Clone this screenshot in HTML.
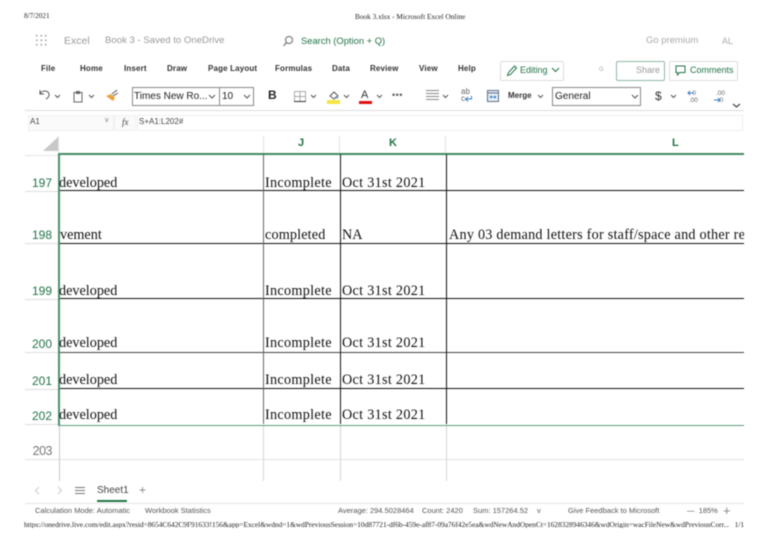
<!DOCTYPE html>
<html><head><meta charset="utf-8"><style>
html,body{margin:0;padding:0;background:#fff}
#p{position:relative;width:768px;height:543px;overflow:hidden;background:#fff;font-family:"Liberation Sans",sans-serif;filter:blur(.45px)}
#p div,#p svg{position:absolute}
.t{white-space:nowrap;line-height:1}
.s{font-family:"Liberation Serif",serif;color:#222}
.c{font-family:"Liberation Serif",serif;font-size:14.2px;color:#111;white-space:nowrap;line-height:1}
.w{letter-spacing:.3px}
.r{font-size:12px;color:#217346;left:25px;width:27px;text-align:right;line-height:1}
.m{font-size:8px;font-weight:bold;color:#333;white-space:nowrap;line-height:1;letter-spacing:.15px}
.h{font-size:11px;font-weight:bold;color:#217346;line-height:1}
.b{background:#111}
.v{background:#666;width:1px}
.st{font-size:7.5px;color:#555;white-space:nowrap;line-height:1}
</style></head><body><div id="p">
<div class="t s" style="left:24px;top:13px;font-size:7.2px">8/7/2021</div>
<div class="t s" style="left:355px;top:13px;font-size:7.3px">Book 3.xlsx - Microsoft Excel Online</div>

<svg style="left:35px;top:34px" width="13" height="13" fill="#999"><rect x="1" y="1" width="1.5" height="1.5"/><rect x="5.5" y="1" width="1.5" height="1.5"/><rect x="10" y="1" width="1.5" height="1.5"/><rect x="1" y="5.5" width="1.5" height="1.5"/><rect x="5.5" y="5.5" width="1.5" height="1.5"/><rect x="10" y="5.5" width="1.5" height="1.5"/><rect x="1" y="10" width="1.5" height="1.5"/><rect x="5.5" y="10" width="1.5" height="1.5"/><rect x="10" y="10" width="1.5" height="1.5"/></svg>
<div class="t" style="left:64px;top:36px;font-size:10.5px;color:#999">Excel</div>
<div class="t" style="left:105px;top:36px;font-size:9.6px;color:#999">Book 3 - Saved to OneDrive</div>
<svg style="left:282px;top:35px" width="12" height="12" fill="none" stroke="#666"><circle cx="7" cy="5" r="3.5"/><path d="M4.500 7.500L1.500 11"/></svg>
<div class="t" style="left:301px;top:36px;font-size:9.4px;color:#217346">Search (Option + Q)</div>
<div class="t" style="left:646px;top:36px;font-size:9.5px;color:#aaa">Go premium</div>
<div class="t" style="left:722px;top:37px;font-size:9px;color:#aaa">AL</div>

<div class="m" style="left:41px;top:65px">File</div>
<div class="m" style="left:80px;top:65px">Home</div>
<div class="m" style="left:124px;top:65px">Insert</div>
<div class="m" style="left:167px;top:65px">Draw</div>
<div class="m" style="left:208px;top:65px">Page Layout</div>
<div class="m" style="left:275px;top:65px">Formulas</div>
<div class="m" style="left:332px;top:65px">Data</div>
<div class="m" style="left:370px;top:65px">Review</div>
<div class="m" style="left:419px;top:65px">View</div>
<div class="m" style="left:458px;top:65px">Help</div>

<div style="left:500px;top:61px;width:62px;height:18px;border:1px solid #ddd;border-radius:2px"></div>
<svg style="left:506px;top:64px" width="12" height="13" fill="none" stroke="#217346"><path d="M1.500 11.500l1-3 6-6.500 2 2-6 6.500z"/></svg>
<div class="t" style="left:520px;top:66px;font-size:9px;color:#217346">Editing</div>
<svg style="left:551px;top:67px" width="9" height="6" fill="none" stroke="#217346"><path d="M1 1l3.500 3.500L8 1"/></svg>
<div class="t" style="left:599px;top:67px;font-size:6px;color:#aaa">G</div>
<div style="left:616px;top:61px;width:47px;height:18px;border:1px solid #8fb8a2;border-radius:2px"></div>
<div class="t" style="left:636px;top:66px;font-size:9px;color:#999">Share</div>
<div style="left:669px;top:61px;width:67px;height:18px;border:1px solid #ddd;border-radius:2px"></div>
<svg style="left:675px;top:65px" width="12" height="11" fill="none" stroke="#217346"><path d="M1 1h9v6.500H4.500L2.500 10V7.500H1z"/></svg>
<div class="t" style="left:690px;top:66px;font-size:9px;color:#217346">Comments</div>

<svg style="left:38px;top:88px" width="15" height="13" fill="none" stroke="#555"><path d="M2 2v4h4M2 6c2-4 8-4 9 0 .5 2-1 4-3 5"/></svg>
<svg style="left:54px;top:94px" width="7" height="5" fill="none" stroke="#555"><path d="M1 1l2.500 2.500L6 1"/></svg>
<svg style="left:72px;top:90px" width="12" height="13" fill="none" stroke="#666"><path d="M2 2.500h8v9.500H2zM4.500 1.500h3v2h-3z"/></svg>
<svg style="left:88px;top:94px" width="7" height="5" fill="none" stroke="#555"><path d="M1 1l2.500 2.500L6 1"/></svg>
<svg style="left:105px;top:89px" width="14" height="14"><path d="M1 7l5-2 4 4-2 3z" fill="#e8a33d"/><path d="M7 5l5-4M8 7l5-3" stroke="#555" fill="none"/></svg>
<div style="left:132px;top:87px;width:86px;height:17px;border:1px solid #888"></div>
<div style="left:219px;top:87px;width:33px;height:17px;border:1px solid #888"></div>
<div class="t" style="left:134px;top:92px;font-size:10px;color:#222">Times New Ro...</div>
<svg style="left:208px;top:94px" width="8" height="5" fill="none" stroke="#555"><path d="M1 1l3 3 3-3"/></svg>
<div class="t" style="left:222px;top:92px;font-size:10px;color:#222">10</div>
<svg style="left:243px;top:94px" width="8" height="5" fill="none" stroke="#555"><path d="M1 1l3 3 3-3"/></svg>
<div class="t" style="left:268px;top:89px;font-size:12px;font-weight:bold;color:#222">B</div>
<svg style="left:293px;top:90px" width="14" height="13" fill="none" stroke="#aaa"><path d="M1.500 1.500h11v10h-11zM7 1.500v10M1.500 6.500h11"/><path d="M1 11.500h12" stroke="#333"/></svg>
<svg style="left:310px;top:94px" width="7" height="5" fill="none" stroke="#555"><path d="M1 1l2.500 2.500L6 1"/></svg>
<svg style="left:327px;top:89px" width="14" height="16"><path d="M3 7l4-4 4 4-4 3z" fill="none" stroke="#555"/><path d="M8 8l3 1" stroke="#3a7fc0" fill="none"/><rect x="0" y="11" width="13" height="4" fill="#f5e642"/></svg>
<svg style="left:343px;top:94px" width="7" height="5" fill="none" stroke="#555"><path d="M1 1l2.500 2.500L6 1"/></svg>
<div class="t" style="left:361px;top:90px;font-size:11px;color:#333">A</div>
<div style="left:359px;top:101px;width:13px;height:3px;background:#e01010"></div>
<svg style="left:376px;top:94px" width="7" height="5" fill="none" stroke="#555"><path d="M1 1l2.500 2.500L6 1"/></svg>
<div class="t" style="left:392px;top:91px;font-size:9px;color:#555;letter-spacing:.5px">•••</div>
<svg style="left:426px;top:89px" width="14" height="14" fill="none" stroke="#888"><path d="M0 1.500h13M0 4.500h13M0 7.500h13M0 10.500h13"/></svg>
<svg style="left:442px;top:94px" width="7" height="5" fill="none" stroke="#555"><path d="M1 1l2.500 2.500L6 1"/></svg>
<div class="t" style="left:461px;top:88px;font-size:8px;color:#666;line-height:7px;width:10px">ab<br>c</div>
<svg style="left:464px;top:95px" width="9" height="8" fill="none" stroke="#3a7fc0"><path d="M7.500 1v3H2M4 2L1.500 4 4 6.500"/></svg>
<svg style="left:487px;top:90px" width="13" height="13" fill="none"><rect x=".5" y=".5" width="11" height="11" stroke="#5f6f8a" fill="#e4eef8"/><path d="M.5 3h11" stroke="#5f6f8a"/><path d="M3 7h6M3 7l1.500-1.200M3 7l1.500 1.200M9 7L7.500 5.800M9 7L7.500 8.200" stroke="#2b6fb3" stroke-width=".8"/></svg>
<div class="t" style="left:508px;top:92px;font-size:8px;font-weight:bold;color:#333">Merge</div>
<svg style="left:537px;top:94px" width="7" height="5" fill="none" stroke="#555"><path d="M1 1l2.500 2.500L6 1"/></svg>
<div style="left:552px;top:87px;width:87px;height:17px;border:1px solid #888"></div>
<div class="t" style="left:555px;top:92px;font-size:10px;color:#222">General</div>
<svg style="left:631px;top:94px" width="8" height="5" fill="none" stroke="#555"><path d="M1 1l3 3 3-3"/></svg>
<div class="t" style="left:655px;top:90px;font-size:12px;color:#333">$</div>
<svg style="left:670px;top:94px" width="7" height="5" fill="none" stroke="#555"><path d="M1 1l2.500 2.500L6 1"/></svg>
<div class="t" style="left:687px;top:90px;font-size:6.500px;color:#666;line-height:7px">&nbsp;&nbsp;&nbsp;0<br>&nbsp;.00</div>
<svg style="left:687px;top:90px" width="7" height="6" fill="none" stroke="#3a7fc0"><path d="M7 3H1M3 1L1 3l2 2"/></svg>
<div class="t" style="left:716px;top:90px;font-size:6.500px;color:#666;line-height:7px">.00<br>&nbsp;&nbsp;0</div>
<svg style="left:714px;top:97px" width="7" height="6" fill="none" stroke="#3a7fc0"><path d="M0 3h6M4 1l2 2-2 2"/></svg>
<svg style="left:732px;top:103px" width="9" height="6" fill="none" stroke="#444" stroke-width="1.200"><path d="M1 1l3.500 3L8 1"/></svg>
<div style="left:25px;top:110px;width:719px;height:1px;background:#ddd"></div>

<div style="left:28px;top:115px;width:84px;height:14px;background:#fafafa;border:1px solid #f0f0f0"></div>
<div class="t" style="left:30px;top:118px;font-size:8px;color:#444">A1</div>
<div class="t" style="left:105px;top:117px;font-size:7px;color:#777">v</div>
<div style="left:114px;top:115px;width:20px;height:14px;background:#fafafa;border:1px solid #f0f0f0"></div>
<div class="t" style="left:122px;top:118px;font-size:9px;font-style:italic;font-family:'Liberation Serif',serif;color:#444">fx</div>
<div style="left:137px;top:115px;width:604px;height:14px;border:1px solid #eee"></div>
<div class="t" style="left:139px;top:118px;font-size:8px;color:#444">S+A1:L202#</div>

<svg style="left:42px;top:136px" width="16" height="17"><path d="M1 15L16 1v14z" fill="#c8c8c8"/></svg>
<div style="left:58px;top:136px;width:1px;height:17px;background:#e2e2e2"></div>
<div style="left:263px;top:136px;width:1px;height:17px;background:#e2e2e2"></div>
<div style="left:339px;top:136px;width:1px;height:17px;background:#e2e2e2"></div>
<div style="left:445px;top:136px;width:1px;height:17px;background:#e2e2e2"></div>
<div class="h" style="left:298px;top:138px">J</div>
<div class="h" style="left:389px;top:138px">K</div>
<div class="h" style="left:672px;top:138px">L</div>

<div style="left:25px;top:155px;width:33px;height:1px;background:#e4e4e4"></div>
<div style="left:25px;top:191px;width:33px;height:1px;background:#ddd"></div>
<div style="left:25px;top:243px;width:33px;height:1px;background:#ddd"></div>
<div style="left:25px;top:299px;width:33px;height:1px;background:#ddd"></div>
<div style="left:25px;top:352px;width:33px;height:1px;background:#ddd"></div>
<div style="left:25px;top:389px;width:33px;height:1px;background:#ddd"></div>
<div style="left:25px;top:424px;width:33px;height:1px;background:#ddd"></div>
<div style="left:25px;top:459px;width:719px;height:1px;background:#e2e2e2"></div>

<div class="b" style="left:59px;top:190px;width:685px;height:1px"></div>
<div class="b" style="left:59px;top:243px;width:685px;height:1px"></div>
<div class="b" style="left:59px;top:298px;width:685px;height:1px"></div>
<div class="b" style="left:59px;top:352px;width:685px;height:1px;background:#444"></div>
<div class="b" style="left:59px;top:388px;width:685px;height:1px"></div>
<div class="v" style="left:263px;top:154px;height:270px"></div>
<div class="b" style="left:340px;top:154px;width:1px;height:270px"></div>
<div class="b" style="left:446px;top:154px;width:1px;height:270px"></div>

<div style="left:263px;top:426px;width:1px;height:55px;background:#d6d6d6"></div>
<div style="left:340px;top:426px;width:1px;height:55px;background:#d6d6d6"></div>
<div style="left:446px;top:426px;width:1px;height:55px;background:#d6d6d6"></div>
<div style="left:59px;top:426px;width:1px;height:55px;background:#c8c8c8"></div>

<div style="left:58px;top:153px;width:686px;height:1.500px;background:#217346;opacity:.85"></div>
<div style="left:58px;top:153px;width:1.500px;height:272px;background:#4c8e6c"></div>
<div style="left:58px;top:424.500px;width:686px;height:1.500px;background:#5e9a7d"></div>

<div class="r" style="top:177px">197</div><div class="c" style="left:59px;top:176px">developed</div><div class="c w" style="left:265px;top:176px">Incomplete</div><div class="c w" style="left:342px;top:176px">Oct 31st 2021</div>
<div class="r" style="top:229px">198</div><div class="c" style="left:60px;top:228px">vement</div><div class="c" style="left:265px;top:228px;letter-spacing:.15px">completed</div><div class="c" style="left:342px;top:228px">NA</div>
<div class="c" style="left:449px;top:228px;width:295px;overflow:hidden;letter-spacing:.24px">Any 03 demand letters for staff/space and other re</div>
<div class="r" style="top:285px">199</div><div class="c" style="left:59px;top:284px">developed</div><div class="c w" style="left:265px;top:284px">Incomplete</div><div class="c w" style="left:342px;top:284px">Oct 31st 2021</div>
<div class="r" style="top:338px">200</div><div class="c" style="left:59px;top:336px">developed</div><div class="c w" style="left:265px;top:336px">Incomplete</div><div class="c w" style="left:342px;top:336px">Oct 31st 2021</div>
<div class="r" style="top:375px">201</div><div class="c" style="left:59px;top:373px">developed</div><div class="c w" style="left:265px;top:373px">Incomplete</div><div class="c w" style="left:342px;top:373px">Oct 31st 2021</div>
<div class="r" style="top:410px">202</div><div class="c" style="left:59px;top:408px">developed</div><div class="c w" style="left:265px;top:408px">Incomplete</div><div class="c w" style="left:342px;top:408px">Oct 31st 2021</div>
<div class="r" style="top:445px;color:#777;font-size:12.500px;letter-spacing:-.5px">203</div>

<svg style="left:34px;top:486px" width="30" height="9" fill="none" stroke="#ccc"><path d="M5 1L1.500 4.500 5 8M24 1l3.500 3.500L24 8"/></svg>
<svg style="left:75px;top:486px" width="11" height="9" fill="none" stroke="#777"><path d="M0 1.500h10M0 4.500h10M0 7.500h10"/></svg>
<div class="t" style="left:97px;top:486px;font-size:10px;color:#444">Sheet1</div>
<div style="left:97px;top:500px;width:30px;height:2px;background:#217346"></div>
<div class="t" style="left:139px;top:484px;font-size:12px;color:#888">+</div>
<div style="left:25px;top:503px;width:719px;height:1px;background:#e4e4e4"></div>

<div class="st" style="left:35px;top:507px">Calculation Mode: Automatic</div>
<div class="st" style="left:145px;top:507px">Workbook Statistics</div>
<div class="st" style="left:338px;top:507px">Average: 294.5028464</div>
<div class="st" style="left:422px;top:507px">Count: 2420</div>
<div class="st" style="left:473px;top:507px">Sum: 157264.52</div>
<div class="st" style="left:537px;top:507px">v</div>
<div class="st" style="left:568px;top:507px">Give Feedback to Microsoft</div>
<div class="st" style="left:687px;top:507px">—&nbsp;&nbsp;185%</div>
<div class="t" style="left:723px;top:504px;font-size:13px;color:#888">+</div>

<div class="t s" style="left:24px;top:521px;font-size:7.37px;width:730px;overflow:hidden">https://onedrive.live.com/edit.aspx?resid=8654C642C9F91633!156&amp;app=Excel&amp;wdnd=1&amp;wdPreviousSession=10d87721-df6b-459e-af87-09a76f42e5ea&amp;wdNewAndOpenCt=1628328946346&amp;wdOrigin=wacFileNew&amp;wdPreviousCorr...&nbsp;&nbsp;&nbsp;1/1</div>
</div></body></html>
